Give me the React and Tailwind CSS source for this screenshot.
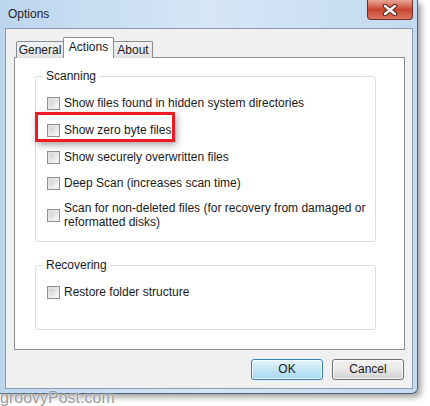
import React from 'react';

const font = { fontFamily: '"Segoe UI", "Liberation Sans", Arial, sans-serif' };

function Check({ children }) {
    return (
        <div className="flex items-center gap-[4px]">
            <span className="w-[13px] h-[13px] shrink-0 border border-[#8f8f8f] bg-gradient-to-br from-[#dcdcdc] to-[#f8f8f8] p-[2px]">
                <span className="block w-full h-full bg-gradient-to-br from-[#cfcfcf] to-[#f5f5f5]" />
            </span>
            <span className="text-[12px] leading-[14px] text-[#1a1a1a]">{children}</span>
        </div>
    );
}

function Tab({ label, active, className }) {
    return (
        <div
            className={`flex items-start justify-center border border-b-0 border-[#898c95] text-[12px] leading-[15px] text-[#1a1a1a] rounded-t-[2px] ${
                active ? 'bg-white h-[21px] pt-[2px] relative z-20' : 'bg-gradient-to-b from-[#f2f2f2] to-[#e3e3e3] h-[17px] pt-[1px]'
            } ${className}`}
        >
            {label}
        </div>
    );
}

export default function App() {
    return (
        <div className="w-[430px] h-[406px] bg-white relative overflow-hidden" style={font}>
            <div className="w-[418px] h-[394px] flex flex-col border-r border-b border-[#4d6178] rounded-br-[6px] bg-gradient-to-r from-[#bcd6ef] via-[#d6e6f6] to-[#c3daf1] shadow-[3px_3px_6px_rgba(0,0,0,0.4)]">
                <div className="h-[28px] flex items-start justify-between">
                    <span className="pl-[8px] pt-[7px] text-[12px] leading-[15px] text-[#1e1e1e]">Options</span>
                    <div className="mr-[4px] w-[46px] h-[20px] rounded-b-[4px] border border-t-0 border-[#6e2c22] bg-gradient-to-b from-[#e7a597] via-[#c9462f] to-[#d9765f] flex items-center justify-center">
                        <svg width="16" height="12" viewBox="0 0 16 12">
                            <path d="M3 2 L13 10 M13 2 L3 10" stroke="#5a2018" strokeWidth="4.5" strokeLinecap="round" />
                            <path d="M3 2 L13 10 M13 2 L3 10" stroke="#ffffff" strokeWidth="2.5" strokeLinecap="round" />
                        </svg>
                    </div>
                </div>

                <div className="ml-[5px] mr-[4px] h-[361px] border border-[#8c9cae] bg-[#f0f0f0] flex flex-col">
                    <div className="ml-[10px] mt-[8px] h-[21px] -mb-[1px] flex items-end relative z-10">
                        <Tab label="General" className="w-[48px]" />
                        <Tab label="Actions" active className="w-[51px] -ml-[1px]" />
                        <Tab label="About" className="w-[40px] -ml-[1px]" />
                    </div>

                    <div className="ml-[8px] w-[391px] h-[293px] border border-[#898c95] bg-white relative pl-[20px] pt-[11px]">
                        <fieldset className="w-[341px] h-[173px] border border-[#d5dfe5] rounded-[3px] pl-[11px]">
                            <legend className="ml-[-4px] px-[3px] text-[12px] leading-[15px] text-[#1a1a1a]">Scanning</legend>
                            <div className="flex flex-col mt-[12px]">
                                <Check>Show files found in hidden system directories</Check>
                                <div className="mt-[13px]"><Check>Show zero byte files</Check></div>
                                <div className="mt-[13px]"><Check>Show securely overwritten files</Check></div>
                                <div className="mt-[12px]"><Check>Deep Scan (increases scan time)</Check></div>
                                <div className="mt-[11px]">
                                    <Check>
                                        Scan for non-deleted files (for recovery from damaged or
                                        <br />
                                        reformatted disks)
                                    </Check>
                                </div>
                            </div>
                        </fieldset>

                        <fieldset className="mt-[16px] w-[341px] h-[72px] border border-[#d5dfe5] rounded-[3px] pl-[11px]">
                            <legend className="ml-[-4px] px-[3px] text-[12px] leading-[15px] text-[#1a1a1a]">Recovering</legend>
                            <div className="mt-[12px]"><Check>Restore folder structure</Check></div>
                        </fieldset>

                        <div className="absolute left-[20px] top-[54px] w-[140px] h-[30px] border-[3px] border-[#ec1c24] shadow-[2px_3px_7px_rgba(0,0,0,0.35)]" />
                    </div>

                    <div className="mt-[9px] pr-[8px] flex justify-end gap-[9px]">
                        <button className="w-[72px] h-[21px] rounded-[3px] border border-[#3c7fb1] bg-gradient-to-b from-[#e5f4fc] via-[#c4e5f6] to-[#a9d9f2] text-[12px] leading-[15px] text-[#1a1a1a] shadow-[inset_0_0_0_1px_rgba(255,255,255,0.7)]">
                            OK
                        </button>
                        <button className="w-[72px] h-[21px] rounded-[3px] border border-[#707070] bg-gradient-to-b from-[#f2f2f2] via-[#e8e8e8] to-[#d2d2d2] text-[12px] leading-[15px] text-[#1a1a1a] shadow-[inset_0_0_0_1px_rgba(255,255,255,0.7)]">
                            Cancel
                        </button>
                    </div>
                </div>
            </div>

            <span
                className="absolute left-[0px] top-[389px] text-[16px] leading-[17px] text-[#9a9a9a]"
                style={{ fontFamily: '"Liberation Sans", Arial, sans-serif', textShadow: '0 0 1px #fff, 0 0 2px #fff' }}
            >
                groovyPost.com
            </span>
        </div>
    );
}
